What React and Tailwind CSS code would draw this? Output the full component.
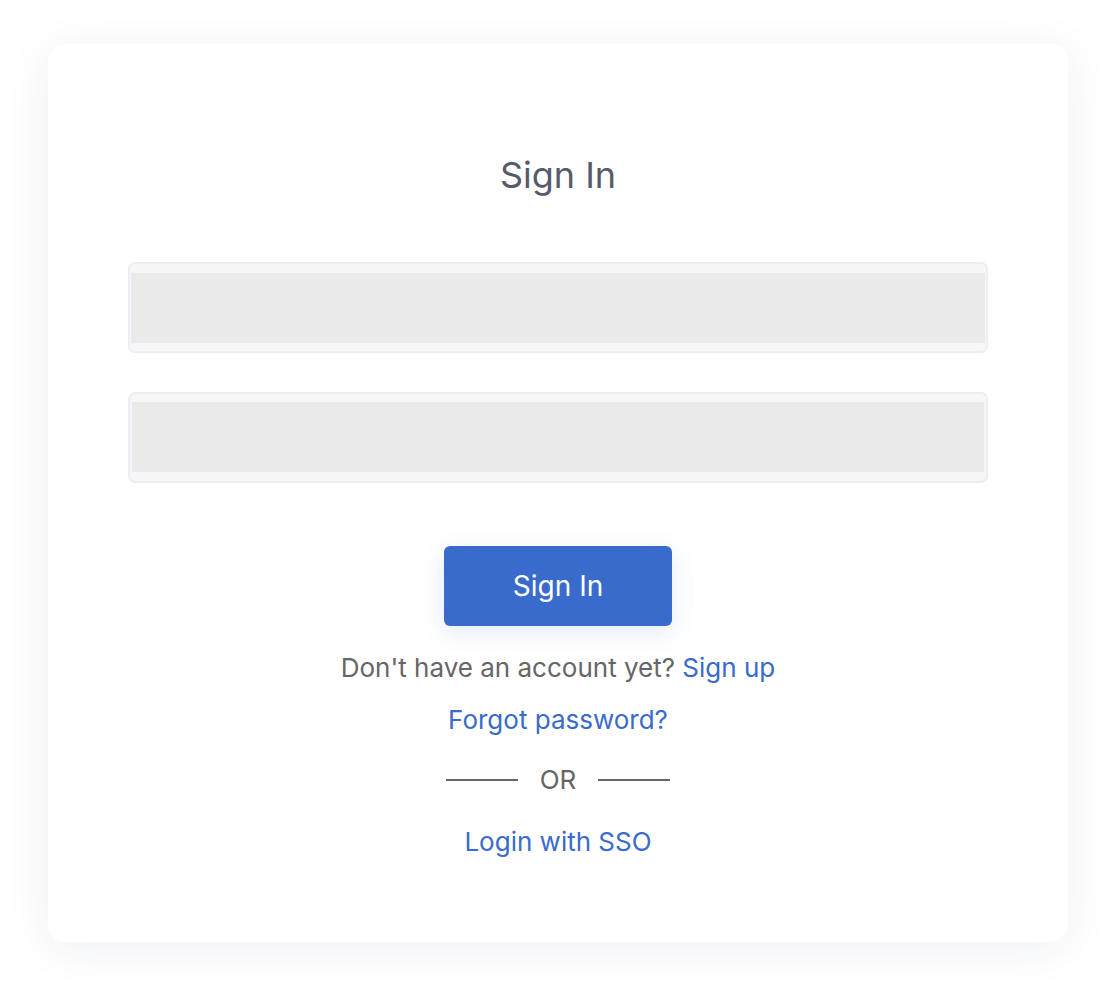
export default function App() {
  return (
    <div
      className="min-h-screen bg-white pt-[44px] pl-[48px]"
      style={{ fontFamily: "Inter, 'Noto Sans', sans-serif" }}
    >
      <div className="w-[1020px] h-[898px] rounded-[18px] bg-white shadow-[0_6px_48px_rgba(30,40,80,0.07)] px-[80px] pt-[109px] flex flex-col items-center">
        {/* Title */}
        <h1 className="text-[36px] leading-[44px] text-[#565b6b] font-normal">
          Sign In
        </h1>

        {/* Inputs */}
        <div className="w-full mt-[65px] flex flex-col gap-[39px]">
          <div className="h-[91px] rounded-[7px] border-2 border-[#eceef1] bg-[#f6f7f9] pt-[9px] px-[1px]">
            <div className="h-[70px] bg-[#eaeaea]" />
          </div>
          <div className="h-[91px] rounded-[7px] border-2 border-[#eceef1] bg-[#f6f7f9] pt-[8px] px-[2px]">
            <div className="h-[70px] bg-[#eaeaea]" />
          </div>
        </div>

        {/* Button */}
        <button className="mt-[63px] w-[228px] h-[80px] rounded-[6px] bg-[#386bcc] text-white text-[28px] shadow-[0_6px_24px_rgba(56,107,204,0.14)]">
          Sign In
        </button>

        {/* Links */}
        <p className="mt-[26px] text-[26px] leading-[32px] text-[#666666]">
          Don't have an account yet?{" "}
          <a href="#" className="text-[#3a6bcc]">
            Sign up
          </a>
        </p>
        <a href="#" className="mt-[20px] text-[26px] leading-[32px] text-[#3a6bcc]">
          Forgot password?
        </a>
        <div className="mt-[28px] flex items-center gap-[22px] text-[26px] leading-[32px] text-[#666666]">
          <span className="w-[72px] h-[2px] bg-[#666666]" />
          <span>OR</span>
          <span className="w-[72px] h-[2px] bg-[#666666]" />
        </div>
        <a href="#" className="mt-[30px] text-[26px] leading-[32px] text-[#3a6bcc]">
          Login with SSO
        </a>
      </div>
    </div>
  );
}
